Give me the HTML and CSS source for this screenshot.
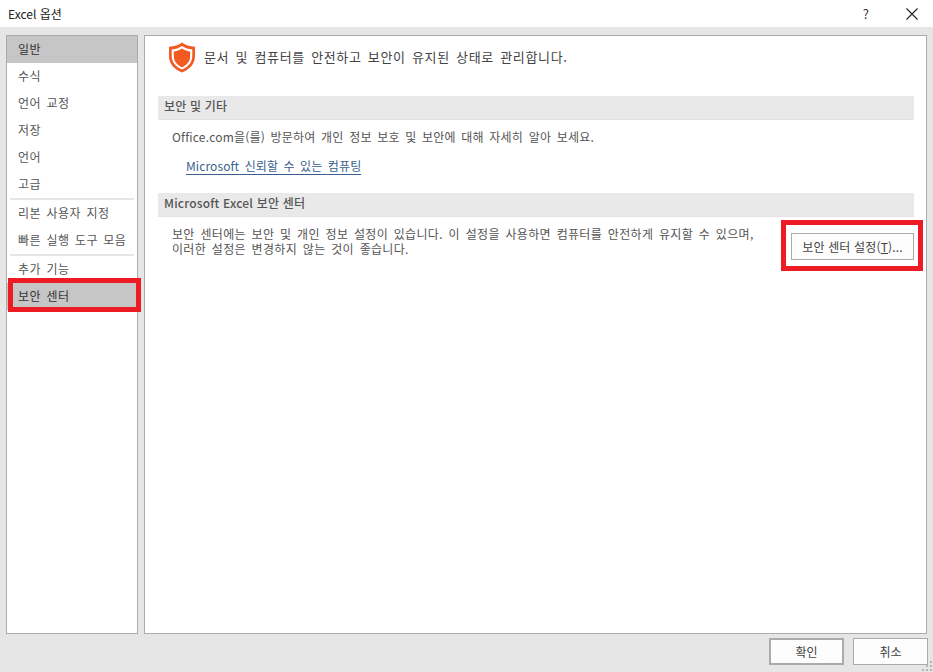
FILE: index.html
```html
<!DOCTYPE html>
<html lang="ko">
<head>
<meta charset="utf-8">
<title>Excel 옵션</title>
<link rel="stylesheet" href="styles.css">
</head>
<body>
<div class="dialog">
  <header class="titlebar">
    <span class="title">Excel 옵션</span>
    <span class="help">?</span>
    <svg class="close" width="14" height="14" viewBox="0 0 14 14"><path d="M1.5 1.5 L12.5 12.5 M12.5 1.5 L1.5 12.5" stroke="#222" stroke-width="1.1" fill="none"/></svg>
  </header>
  <div class="body">
    <nav class="sidebar">
      <div class="item selected">일반</div>
      <div class="item">수식</div>
      <div class="item">언어 교정</div>
      <div class="item">저장</div>
      <div class="item">언어</div>
      <div class="item">고급</div>
      <div class="sep"></div>
      <div class="item">리본 사용자 지정</div>
      <div class="item">빠른 실행 도구 모음</div>
      <div class="sep"></div>
      <div class="item">추가 기능</div>
      <div class="item selected">보안 센터</div>
    </nav>
    <main class="panel">
      <div class="intro">
        <svg class="shield" width="28" height="31" viewBox="0 0 28 31">
          <path d="M14 .5 C17.5 3 21.5 4.5 27 4.8 V14 C27 22 21.5 27.5 14 30.5 C6.5 27.5 1 22 1 14 V4.8 C6.5 4.5 10.500 3 14 .5 Z" fill="#f25a22"/>
          <path d="M14 4 C17 6 20.500 7.200 24.300 7.500 V14 C24.300 20.500 20 25 14 27.600 C8 25 3.700 20.500 3.700 14 V7.500 C7.500 7.200 11 6 14 4 Z" fill="#fff"/>
          <path d="M14 6.500 C16.800 8.200 19.500 9.200 22.200 9.500 V14 C22.200 19.500 18.800 23 14 25.300 C9.200 23 5.800 19.500 5.800 14 V9.500 C8.500 9.200 11.200 8.200 14 6.500 Z" fill="#f25a22"/>
        </svg>
        <span class="intro-text">문서 및 컴퓨터를 안전하고 보안이 유지된 상태로 관리합니다.</span>
      </div>
      <h2 class="section first">보안 및 기타</h2>
      <p class="line office">Office.com을(를) 방문하여 개인 정보 보호 및 보안에 대해 자세히 알아 보세요.</p>
      <a class="link">Microsoft 신뢰할 수 있는 컴퓨팅</a>
      <h2 class="section second">Microsoft Excel 보안 센터</h2>
      <div class="center-row">
        <p class="desc">보안 센터에는 보안 및 개인 정보 설정이 있습니다. 이 설정을 사용하면 컴퓨터를 안전하게 유지할 수 있으며,<br>이러한 설정은 변경하지 않는 것이 좋습니다.</p>
        <button class="btn settings">보안 센터 설정(<u>T</u>)...</button>
      </div>
    </main>
  </div>
  <footer class="footer">
    <button class="btn action default">확인</button>
    <button class="btn action">취소</button>
  </footer>
  <div class="mark mark-nav"></div>
  <div class="mark mark-btn"></div>
  <svg class="grip" width="12" height="12" viewBox="0 0 12 12"><path d="M9 1h2v2H9zM5 5h2v2H5zM9 5h2v2H9zM1 9h2v2H1zM5 9h2v2H5zM9 9h2v2H9z" fill="#b4b4b4"/></svg>
</div>
</body>
</html>
```
FILE: styles.css
```css
* { box-sizing: border-box; }
html, body { margin: 0; padding: 0; }
body { width: 933px; height: 672px; overflow: hidden; font-family: "Noto Sans CJK KR", "Noto Sans", sans-serif; font-size: 12px; color: #444; }
.dialog { position: relative; width: 933px; height: 672px; background: #e6e6e6; display: flex; flex-direction: column; }
.titlebar { height: 27px; background: #fff; display: flex; align-items: center; padding-left: 8px; color: #222; flex: none; }
.title { flex: 1; font-size: 12px; }
.help { font-size: 13px; margin-right: 36px; color: #333; }
.close { margin-right: 14px; }
.body { flex: none; height: 599px; margin-top: 8px; padding: 0 6px; display: flex; gap: 6px; }
.sidebar { width: 132px; background: #fff; border: 1px solid #ababab; }
.item { height: 27px; line-height: 26px; padding-left: 11px; font-size: 12px; letter-spacing: .5px; word-spacing: 1.5px; color: #555; white-space: nowrap; }
.item.selected { background: #c6c6c6; color: #333; }
.sep { height: 2px; margin: 0 3px; background: #e6e6e6; }
.panel { flex: 1; background: #fff; border: 1px solid #ababab; padding: 0 12px 0 13px; }
.intro { display: flex; align-items: center; height: 42px; padding: 0 0 0 10px; }
.shield { margin-top: 1px; flex: none; }
.intro-text { margin: 0 0 2px 8px; font-size: 13px; letter-spacing: .65px; word-spacing: 2px; color: #444; }
.section { margin: 0; height: 24px; line-height: 19px; background: #e9e9e9; padding-left: 6px; font-size: 12px; font-weight: 500; letter-spacing: .2px; color: #555; border-bottom: 1px solid #e2e2e2; }
.section.first { margin-top: 18px; }
.section.second { margin-top: 18px; }
.line { margin: 0; }
.office { margin: 8px 0 0 14px; line-height: 18px; font-size: 12px; letter-spacing: .2px; word-spacing: 2px; color: #555; }
.link { display: inline-block; margin: 12px 0 0 28px; line-height: 16px; font-size: 12px; letter-spacing: .1px; word-spacing: 2px; color: #3a5f8f; border-bottom: 1px solid #3a5f8f; }
.center-row { display: flex; justify-content: space-between; padding: 9px 0 0 14px; align-items: flex-start; }
.desc { margin: 0; font-size: 12px; line-height: 15px; letter-spacing: .33px; word-spacing: 2px; color: #555; white-space: nowrap; }
.btn { background: #fdfdfd; border: 1px solid #ababab; font: inherit; color: #444; padding: 0; }
.settings { width: 123px; height: 27px; margin-top: 7px; font-size: 12px; letter-spacing: .15px; }
.footer { flex: none; display: flex; justify-content: flex-end; gap: 9px; padding: 4px 5px 0 0; }
.action { width: 75px; height: 27px; font-size: 12px; }
.default { border: 2px solid #ababab; }
.mark { position: absolute; border: 5px solid #ed1c24; pointer-events: none; }
.mark-nav { left: 8px; top: 278px; width: 133px; height: 34px; }
.mark-btn { left: 781px; top: 220px; width: 142px; height: 51px; }
.grip { position: absolute; right: 0; bottom: 0; }
```
